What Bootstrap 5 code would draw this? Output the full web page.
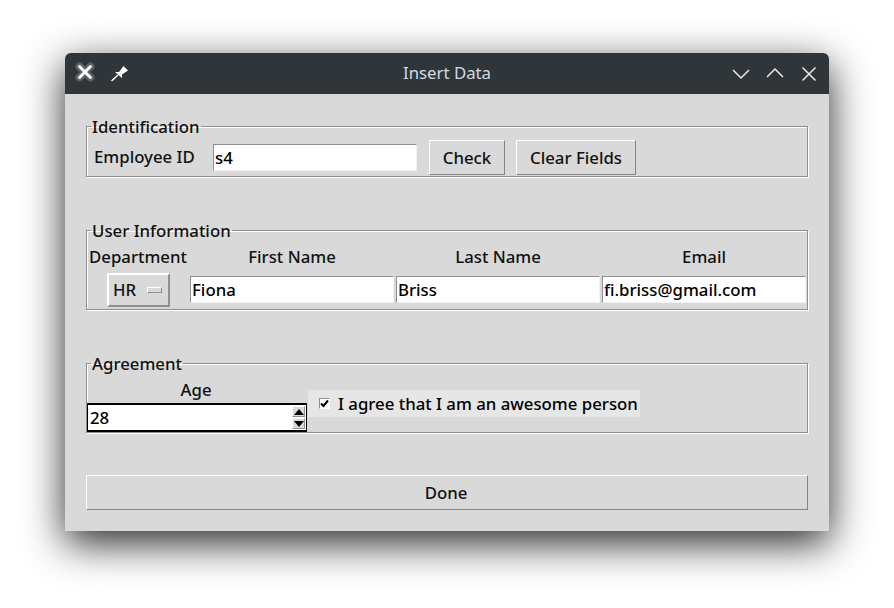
<!DOCTYPE html>
<html lang="en">
<head>
<meta charset="utf-8">
<title>Insert Data</title>
<link rel="stylesheet" href="https://cdn.jsdelivr.net/npm/bootstrap@5.3.0/dist/css/bootstrap.min.css">
<style>
html,body{height:100%;background:#fff;overflow:hidden}
body{font-family:"Noto Sans",sans-serif;font-size:16.8px;font-weight:500;color:#111;line-height:22px}
.win{width:764px;height:478px;margin:53px 0 0 65px;background:#d9d9d9;border-radius:6px 6px 0 0;box-shadow:0 12px 40px rgba(0,0,0,.85)}
.tbar{height:41px;background:#2f3538;border-radius:6px 6px 0 0;color:#d3dae3;font-weight:400;padding:0 11px 0 9px}
.tbar svg{display:block}
.tside{flex:1}
.closeic{margin-top:-3px}
.pinic{margin-left:14px}
.tname{padding:0 0 2px 2px}
.pane{padding:21px 21px 0}
.grp{border:1px solid #8f8f8f;box-shadow:inset 1px 1px 0 #fff,1px 1px 0 #fff;margin:0;min-width:0;padding:0 1px 1px}
.grp legend{float:none;width:auto;font-size:16.8px;font-weight:500;line-height:22px;margin:0 0 0 3px;padding:0 1px;color:#111;position:relative;top:1px}
.g1{height:62px}.g2{height:91px;margin-top:42px}.g3{height:81px;margin-top:42px}
.ent{height:27px;background:#fff;border:1px solid #8f8f8f;border-right-color:#f2f2f2;border-bottom-color:#f2f2f2;padding:0 1px;line-height:25px;color:#000;white-space:nowrap;overflow:hidden}
.rbtn{background:#d9d9d9;border:1px solid;border-color:#fff #858585 #858585 #fff;color:#111;text-align:center}
.r1{margin-top:3px;padding-left:6px}
.lbl1{width:119px;padding-top:6px}
.e1{width:204px}
.b1{width:76px;height:35px;line-height:33px;margin-left:12px}
.b2{width:120px;height:35px;line-height:33px;margin-left:11px}
.grid2{display:grid;grid-template-columns:100px repeat(3,204px);column-gap:2px;margin-top:5px;text-align:center}
.grid2 .ent{text-align:left}
.cell2{margin-top:8px}
.hrcell{display:flex;justify-content:flex-end;padding-right:18px}
.opt{width:63px;height:34px;margin-top:-3px;border-width:2px;border-color:#fff #8f8f8f #8f8f8f #fff;padding:0 6px 0 4px;line-height:30px}
.ind{width:15px;height:6px;background:#d9d9d9;border:1px solid;border-color:#fff #8f8f8f #8f8f8f #fff}
.lower{margin:5px 0 0 -1px}
.agecol{width:220px;text-align:center}
.agehead{padding-right:2px}
.spin{height:29px;margin-top:2px;background:#fff;border:solid #000;border-width:1px 1px 2px 1px;box-shadow:inset 0 1px 0 #000;text-align:left;padding:2px 2px 0 2px;line-height:24px;color:#000}
.arrows{width:13px;margin:0 -1px 0 0;gap:1px}
.arr{height:11px;background:#d9d9d9;border:1px solid;border-color:#fff #8f8f8f #8f8f8f #fff}
.chk{width:332px;height:27px;background:#e6e6e6;margin:11px 0 0 1px;padding-left:11px;line-height:27px;color:#000}
.box{width:11px;height:11px;background:#fff;border:1px solid;border-color:#8f8f8f #fff #fff #8f8f8f;margin-right:8px}
.done{height:35px;line-height:33px;margin-top:42px;padding-right:2px}
</style>
</head>
<body>
<div class="win">
  <div class="tbar d-flex align-items-center">
    <div class="tside d-flex align-items-center">
      <svg class="closeic" width="22" height="22" viewBox="0 0 22 22" aria-hidden="true"><path d="M5.5 5.5 16.5 16.5M16.5 5.5 5.5 16.5" stroke="#5b6063" stroke-width="8" stroke-linecap="round"/><path d="M5.5 5.5 16.5 16.5M16.5 5.5 5.5 16.5" stroke="#fff" stroke-width="3" stroke-linecap="round"/></svg>
      <svg class="pinic" width="20" height="20" viewBox="0 0 20 20" aria-hidden="true"><path d="M1.5 17 8 11" stroke="#fff" stroke-width="1.6"/><path d="M5 8 9 8 13.5 2 18 6.5 12 10.5 12 14Z" fill="#fff"/></svg>
    </div>
    <div class="tname">Insert Data</div>
    <div class="tside d-flex align-items-center justify-content-end">
      <svg width="18" height="18" viewBox="0 0 18 18" aria-hidden="true"><path d="M1 5 9 13 17 5" fill="none" stroke="#e8ecef" stroke-width="1.5"/></svg>
      <svg class="ms-3" width="18" height="18" viewBox="0 0 18 18" aria-hidden="true"><path d="M1 12 9 4 17 12" fill="none" stroke="#e8ecef" stroke-width="1.5"/></svg>
      <svg class="ms-3" width="18" height="18" viewBox="0 0 18 18" aria-hidden="true"><path d="M2.5 2.5 15.5 15.5M15.5 2.5 2.5 15.5" fill="none" stroke="#e8ecef" stroke-width="1.5"/></svg>
    </div>
  </div>
  <div class="pane">
    <fieldset class="grp g1">
      <legend>Identification</legend>
      <div class="r1 d-flex align-items-start">
        <div class="lbl1">Employee ID</div>
        <div class="ent e1 mt-1">s4</div>
        <div class="rbtn b1">Check</div>
        <div class="rbtn b2">Clear Fields</div>
      </div>
    </fieldset>
    <fieldset class="grp g2">
      <legend>User Information</legend>
      <div class="grid2">
        <div>Department</div><div>First Name</div><div>Last Name</div><div>Email</div>
        <div class="hrcell cell2"><div class="rbtn opt d-flex align-items-center justify-content-between"><span>HR</span><span class="ind"></span></div></div>
        <div class="ent cell2">Fiona</div><div class="ent cell2">Briss</div><div class="ent cell2">fi.briss@gmail.com</div>
      </div>
    </fieldset>
    <fieldset class="grp g3">
      <legend>Agreement</legend>
      <div class="lower d-flex align-items-start">
        <div class="agecol">
          <div class="agehead">Age</div>
          <div class="spin d-flex justify-content-between">
            <span>28</span>
            <div class="arrows d-flex flex-column">
              <div class="arr d-flex align-items-center justify-content-center"><svg width="10" height="6" viewBox="0 0 10 6" aria-hidden="true"><path d="M5 0 10 6H0Z" fill="#000"/></svg></div>
              <div class="arr d-flex align-items-center justify-content-center"><svg width="10" height="6" viewBox="0 0 10 6" aria-hidden="true"><path d="M0 0H10L5 6Z" fill="#000"/></svg></div>
            </div>
          </div>
        </div>
        <div class="chk d-flex align-items-center">
          <span class="box d-flex align-items-center justify-content-center"><svg width="9" height="9" viewBox="0 0 9 9" aria-hidden="true"><path d="M1 4.5 3.5 7 8 1.5" fill="none" stroke="#000" stroke-width="2"/></svg></span>
          <span>I agree that I am an awesome person</span>
        </div>
      </div>
    </fieldset>
    <div class="rbtn done">Done</div>
  </div>
</div>
<script src="https://cdn.jsdelivr.net/npm/bootstrap@5.3.0/dist/js/bootstrap.bundle.min.js"></script>
</body>
</html>
